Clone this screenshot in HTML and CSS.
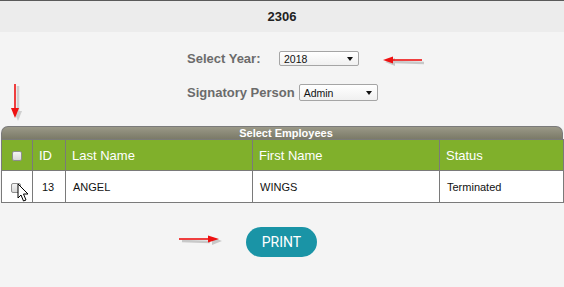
FILE: index.html
```html
<!DOCTYPE html>
<html>
<head>
<meta charset="utf-8">
<link rel="stylesheet" href="styles.css">
</head>
<body>
<div class="page">
  <header class="topbar">2306</header>
  <div class="form">
    <div class="row row-year">
      <span class="label">Select Year:</span>
      <div class="select sel-year"><span>2018</span><i class="caret"></i></div>
    </div>
    <div class="row row-sign">
      <span class="label">Signatory Person</span>
      <div class="select sel-sign"><span>Admin</span><i class="caret"></i></div>
    </div>
  </div>
  <div class="tablewrap">
    <div class="caption">Select Employees</div>
    <table class="emp">
      <colgroup>
        <col class="c-chk"><col class="c-id"><col class="c-ln"><col class="c-fn"><col class="c-st">
      </colgroup>
      <thead>
        <tr><th class="chk"><span class="box"></span></th><th>ID</th><th>Last Name</th><th>First Name</th><th>Status</th></tr>
      </thead>
      <tbody>
        <tr><td class="chk"><span class="box"></span></td><td class="id">13</td><td>ANGEL</td><td>WINGS</td><td>Terminated</td></tr>
      </tbody>
    </table>
  </div>
  <div class="actions">
    <button class="print">PRINT</button>
  </div>

  <svg class="arrow arrow-left" width="44" height="14" viewBox="0 0 44 14">
    <line x1="12" y1="8" x2="42" y2="9" stroke="#c8c8c8" stroke-width="2.5"/>
    <polygon points="3,8 13,4 13,12" fill="#c8c8c8"/>
    <line x1="10" y1="6" x2="40" y2="6" stroke="#ee1111" stroke-width="1.6"/>
    <polygon points="1,6 11,2.5 11,9.5" fill="#ee1111"/>
  </svg>
  <svg class="arrow arrow-down" width="14" height="40" viewBox="0 0 14 40">
    <line x1="8" y1="2" x2="8" y2="30" stroke="#cfcfcf" stroke-width="2.5"/>
    <polygon points="4,27 12,27 8,37" fill="#cfcfcf"/>
    <line x1="5" y1="0" x2="5" y2="26" stroke="#ee1111" stroke-width="1.6"/>
    <polygon points="1,24 9,24 5,34" fill="#ee1111"/>
  </svg>
  <svg class="arrow arrow-right" width="46" height="14" viewBox="0 0 46 14">
    <line x1="4" y1="8" x2="32" y2="9" stroke="#c8c8c8" stroke-width="2.5"/>
    <polygon points="44,8 34,4 34,12" fill="#c8c8c8"/>
    <line x1="1" y1="6" x2="32" y2="6" stroke="#ee1111" stroke-width="1.6"/>
    <polygon points="41,6 30,2.5 30,9.5" fill="#ee1111"/>
  </svg>
  <svg class="cursor" width="13" height="20" viewBox="0 0 13 20">
    <path d="M1 1 L1 15 L4 12 L6.5 18 L9 17 L6.5 11 L11 11 Z" fill="#fff" stroke="#000" stroke-width="1" stroke-linejoin="round"/>
  </svg>
</div>
</body>
</html>
```

FILE: styles.css
```css
* { box-sizing: border-box; }
html, body { margin: 0; padding: 0; }
body {
  background: #f4f4f4;
  font-family: "Liberation Sans", Arial, sans-serif;
  width: 564px;
  height: 287px;
  overflow: hidden;
}
.page { position: relative; width: 564px; height: 287px; }
.topbar {
  border-top: 1px solid #5a5a5a;
  background: #ececec;
  height: 32px;
  display: flex;
  align-items: center;
  justify-content: center;
  font-weight: bold;
  font-size: 13px;
  color: #222;
  padding-bottom: 1px;
}
.form { padding-top: 19px; padding-left: 187px; height: 94px; }
.row { display: flex; align-items: center; }
.row-year { height: 15px; }
.row-sign { margin-top: 18px; height: 17px; }
.label { font-size: 13px; font-weight: bold; color: #6b6b6b; }
.row-year .label { width: 92px; }
.row-sign .label { margin-right: 4px; }
.select {
  position: relative;
  height: 16px;
  border: 1px solid #a5a5a5;
  border-radius: 2px;
  background: linear-gradient(#ffffff, #f0f0f0);
  font-size: 10.5px;
  color: #111;
  display: flex;
  align-items: center;
  padding-left: 4px;
}
.sel-year { width: 80px; height: 15px; }
.sel-sign { width: 79px; height: 17px; }
.caret {
  position: absolute;
  right: 5px;
  top: 50%;
  margin-top: -2px;
  width: 0; height: 0;
  border-left: 3px solid transparent;
  border-right: 3px solid transparent;
  border-top: 4px solid #111;
}
.tablewrap { margin-left: 1px; width: 562px; }
.caption {
  height: 13px;
  background: linear-gradient(#9a9887, #7b7a68);
  border: 1px solid #7a7a7a;
  border-bottom: none;
  border-radius: 7px 7px 0 0;
  color: #fff;
  font-weight: bold;
  font-size: 11px;
  text-align: center;
  line-height: 12px;
  padding-left: 8px;
}
.emp {
  width: 562px;
  border-collapse: collapse;
  table-layout: fixed;
}
.c-chk { width: 31px; }
.c-id { width: 33px; }
.c-ln { width: 187px; }
.c-fn { width: 187px; }
.c-st { width: 124px; }
.emp th, .emp td { border: 1px solid #7a7a7a; text-align: left; }
.emp th {
  background: #80b02b;
  color: #fff;
  font-weight: normal;
  font-size: 13px;
  height: 31px;
  padding: 0 0 0 6px;
}
.emp td {
  background: #fff;
  font-size: 11px;
  color: #111;
  height: 32px;
  padding: 0 0 0 7px;
}
.emp td.id { padding-left: 9px; }
.emp .chk { padding: 0; text-align: center; }
.box {
  display: inline-block;
  width: 10px; height: 10px;
  border: 1px solid #8e8e8e;
  border-radius: 2px;
  background: linear-gradient(#f4f4f4, #d8d8d8);
  vertical-align: middle;
}
.emp td.chk .box { margin-left: -2px; }
.actions { padding-top: 24px; padding-left: 246px; }
.print {
  width: 71px;
  height: 30px;
  border: none;
  border-radius: 15px;
  background: #1a94a6;
  color: #fff;
  font-family: Roboto, "Liberation Sans", sans-serif;
  font-size: 14px;
  padding: 0;
}
.arrow { position: absolute; }
.arrow-left { left: 382px; top: 54px; }
.arrow-down { left: 10px; top: 84px; }
.arrow-right { left: 178px; top: 233px; }
.cursor { position: absolute; left: 17px; top: 183px; }
```
